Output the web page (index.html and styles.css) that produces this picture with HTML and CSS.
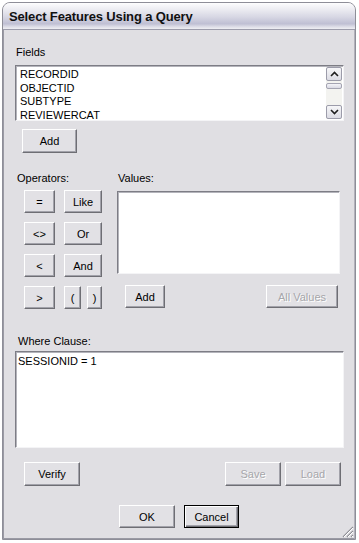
FILE: index.html
```html
<!DOCTYPE html>
<html>
<head>
<meta charset="utf-8">
<title>Select Features Using a Query</title>
<link rel="stylesheet" href="styles.css">
</head>
<body>
<div class="frame">
  <div class="titlebar"><span class="title">Select Features Using a Query</span></div>
  <div class="client">
    <div class="label">Fields</div>
    <div class="listbox">
      <div class="items">
        <div class="item">RECORDID</div>
        <div class="item">OBJECTID</div>
        <div class="item">SUBTYPE</div>
        <div class="item">REVIEWERCAT</div>
      </div>
      <div class="scrollbar">
        <div class="sb-btn">
          <svg width="9" height="6" viewBox="0 0 9 6"><path d="M1 5 L4.5 1.5 L8 5" fill="none" stroke="#1e1e1e" stroke-width="1.6"/></svg>
        </div>
        <div class="sb-track"><div class="sb-thumb"></div></div>
        <div class="sb-btn">
          <svg width="9" height="6" viewBox="0 0 9 6"><path d="M1 1 L4.5 4.5 L8 1" fill="none" stroke="#1e1e1e" stroke-width="1.6"/></svg>
        </div>
      </div>
    </div>
    <button class="btn btn-fields-add">Add</button>

    <div class="mid">
      <div class="ops">
        <div class="label label-ops">Operators:</div>
        <div class="op-grid">
          <button class="btn op">=</button>
          <button class="btn op">Like</button>
          <button class="btn op">&lt;&gt;</button>
          <button class="btn op">Or</button>
          <button class="btn op">&lt;</button>
          <button class="btn op">And</button>
          <button class="btn op">&gt;</button>
          <div class="parens">
            <button class="btn op paren-l">(</button>
            <button class="btn op paren-r">)</button>
          </div>
        </div>
      </div>
      <div class="vals">
        <div class="label">Values:</div>
        <div class="box values-box"></div>
        <div class="vals-btns">
          <button class="btn btn-vals-add">Add</button>
          <button class="btn btn-allvals disabled">All Values</button>
        </div>
      </div>
    </div>

    <div class="label label-where">Where Clause:</div>
    <div class="box where-box">SESSIONID = 1</div>

    <div class="row-actions">
      <button class="btn btn-verify">Verify</button>
      <div class="save-load">
        <button class="btn btn-sl disabled">Save</button>
        <button class="btn btn-sl disabled">Load</button>
      </div>
    </div>

    <div class="row-ok">
      <button class="btn btn-ok">OK</button>
      <button class="btn btn-cancel">Cancel</button>
    </div>

    <div class="grip">
      <svg width="13" height="13" viewBox="0 0 13 13">
        <path d="M12 2 L2 12 M12 6 L6 12 M12 10 L10 12" stroke="#8f8f96" stroke-width="1.2"/>
        <path d="M12 3 L3 12 M12 7 L7 12 M12 11 L11 12" stroke="#ffffff" stroke-width="1"/>
      </svg>
    </div>
  </div>
</div>
</body>
</html>
```

FILE: styles.css
```css
* {
  box-sizing: border-box;
}

html, body {
  margin: 0;
  padding: 0;
  background: #ffffff;
}

body {
  width: 359px;
  height: 543px;
  overflow: hidden;
  font-family: "Liberation Sans", Arial, sans-serif;
  font-size: 11px;
  color: #000;
}

.frame {
  margin: 2px 3px 0 2px;
  width: 354px;
  height: 538px;
  border: 1px solid #8e8e98;
  border-radius: 8px 8px 0 0;
  background: #e0dfe3;
  display: flex;
  flex-direction: column;
  overflow: hidden;
}

.titlebar {
  height: 27px;
  flex: none;
  border-bottom: 1px solid #9c9cab;
  background: linear-gradient(#fdfdfe 0%, #eeeef3 22%, #d6d6e3 55%, #bfbfd3 80%, #dadae5 90%, #efeff3 100%);
  display: flex;
  align-items: center;
  padding-left: 6px;
  padding-top: 1px;
}

.title {
  font-weight: bold;
  font-size: 13px;
  letter-spacing: -0.15px;
  color: #111;
}

.client {
  position: relative;
  flex: 1;
  border-left: 1px solid #9a9aa4;
  border-right: 1px solid #b2b2bb;
  border-bottom: 1px solid #9a9aa4;
  padding: 15px 10px 0 11px;
  display: flex;
  flex-direction: column;
  align-items: flex-start;
}

.label {
  height: 14px;
  line-height: 14px;
  padding-left: 1px;
}

.listbox {
  margin-top: 6px;
  width: 329px;
  height: 56px;
  background: #fff;
  border-top: 1px solid #7d7d85;
  border-left: 1px solid #7d7d85;
  border-right: 1px solid #f4f4f6;
  border-bottom: 1px solid #f4f4f6;
  box-shadow: inset 1px 1px 0 #b4b4bb;
  display: flex;
  overflow: hidden;
}

.items {
  flex: 1;
  padding: 2px 0 0 4px;
  line-height: 13.6px;
  font-size: 11px;
}

.scrollbar {
  width: 16px;
  margin: 1px 1px 1px 0;
  display: flex;
  flex-direction: column;
  background: #f3f3f0;
}

.sb-btn {
  height: 14px;
  flex: none;
  border: 1px solid #9c9caa;
  border-radius: 2px;
  background: linear-gradient(#f6f6f8, #dcdce4);
  display: flex;
  align-items: center;
  justify-content: center;
}

.sb-track {
  flex: 1;
  padding-top: 2px;
}

.sb-thumb {
  height: 6px;
  border: 1px solid #a4a4b2;
  border-radius: 2px;
  background: linear-gradient(#f4f4f8, #dadae4);
}

.btn {
  display: flex;
  align-items: center;
  justify-content: center;
  padding: 0;
  margin: 0;
  font-family: "Liberation Sans", Arial, sans-serif;
  font-size: 11px;
  color: #000;
  background: #e2e1e5;
  border: 1px solid;
  border-color: #ffffff #6e6e74 #6e6e74 #ffffff;
  box-shadow: inset -1px -1px 0 #a2a2aa;
  border-radius: 0;
}

.btn.disabled {
  color: #a6a6aa;
  text-shadow: 1px 1px 0 #ffffff;
}

.btn-fields-add {
  margin-top: 8px;
  margin-left: 7px;
  width: 55px;
  height: 24px;
}

.mid {
  margin-top: 18px;
  display: flex;
  width: 329px;
}

.ops {
  width: 102px;
}

.label-ops {
  padding-left: 2px;
}

.op-grid {
  margin-top: 5px;
  margin-left: 9px;
  display: grid;
  grid-template-columns: 31px 38px;
  grid-auto-rows: 23px;
  column-gap: 9px;
  row-gap: 9px;
}

.op {
  width: 100%;
  height: 23px;
}

.parens {
  display: flex;
  justify-content: space-between;
}

.paren-l {
  width: 17px;
}

.paren-r {
  width: 15px;
}

.vals {
  width: 223px;
  display: flex;
  flex-direction: column;
}

.box {
  background: #fff;
  border-top: 1px solid #7d7d85;
  border-left: 1px solid #7d7d85;
  border-right: 1px solid #f4f4f6;
  border-bottom: 1px solid #f4f4f6;
  box-shadow: inset 1px 1px 0 #b4b4bb;
}

.values-box {
  margin-top: 6px;
  width: 223px;
  height: 83px;
}

.vals-btns {
  margin-top: 11px;
  display: flex;
  justify-content: space-between;
  padding: 0 2px 0 8px;
}

.btn-vals-add {
  width: 40px;
  height: 23px;
}

.btn-allvals {
  width: 72px;
  height: 23px;
}

.label-where {
  margin-top: 25px;
  padding-left: 3px;
}

.where-box {
  margin-top: 3px;
  width: 329px;
  height: 97px;
  padding: 2px 0 0 2px;
  line-height: 14px;
}

.row-actions {
  margin-top: 14px;
  width: 329px;
  display: flex;
  justify-content: space-between;
  padding: 0 3px 0 9px;
}

.btn-verify {
  width: 56px;
  height: 24px;
}

.save-load {
  display: flex;
  gap: 4px;
}

.btn-sl {
  width: 56px;
  height: 24px;
}

.row-ok {
  margin-top: 19px;
  display: flex;
  gap: 9px;
  padding-left: 104px;
}

.btn-ok {
  width: 56px;
  height: 23px;
}

.btn-cancel {
  width: 55px;
  height: 23px;
  border: 1px solid #000;
  box-shadow: inset 1px 1px 0 #ffffff, inset -1px -1px 0 #6e6e74, inset -2px -2px 0 #a2a2aa;
}

.grip {
  position: absolute;
  right: 0;
  bottom: 0;
  width: 13px;
  height: 13px;
}

.grip svg {
  display: block;
}
```
